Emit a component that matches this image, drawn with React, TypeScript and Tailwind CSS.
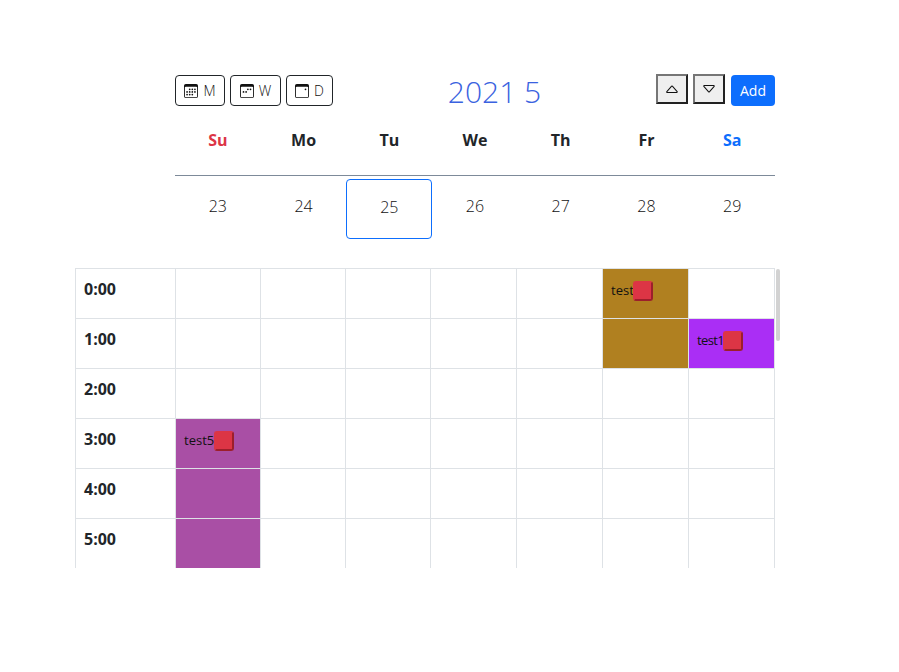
import { BsCalendar3, BsCalendar3Event, BsCalendar3Week, BsCaretDown, BsCaretUp } from 'react-icons/bs';

const days = [
  { label: 'Su', date: 23, color: 'text-[#dc3545]' },
  { label: 'Mo', date: 24, color: 'text-[#212529]' },
  { label: 'Tu', date: 25, color: 'text-[#212529]' },
  { label: 'We', date: 26, color: 'text-[#212529]' },
  { label: 'Th', date: 27, color: 'text-[#212529]' },
  { label: 'Fr', date: 28, color: 'text-[#212529]' },
  { label: 'Sa', date: 29, color: 'text-[#0d6efd]' },
];

const hours = [0, 1, 2, 3, 4, 5];

// key: hour-dayIndex
const events: Record<string, { color: string; title?: string; fit?: string }> = {
  '0-5': { color: 'bg-[#b08020]', title: 'test', fit: '-mr-px' },
  '1-5': { color: 'bg-[#b08020]' },
  '1-6': { color: 'bg-[#aa2ef5]', title: 'test1', fit: '-mr-px tracking-[-0.6px]' },
  '3-0': { color: 'bg-[#a94fa5]', title: 'test5', fit: 'mr-0' },
  '4-0': { color: 'bg-[#a94fa5]' },
  '5-0': { color: 'bg-[#a94fa5]' },
};

function ViewButton({ icon, label, width }: { icon: React.ReactNode; label: string; width: string }) {
  return (
    <button className={`flex h-[31px] items-center justify-center gap-[5px] rounded border border-[#212529] bg-white text-sm font-light text-[#111] ${width}`}>
      {icon}
      {label}
    </button>
  );
}

function ArrowButton({ children }: { children: React.ReactNode }) {
  return (
    <button className="flex h-[30px] w-8 items-center justify-center border-2 border-t-[#767676] border-r-[#222222] border-b-[#222222] border-l-[#767676] bg-[#efefef] text-[#111]">
      {children}
    </button>
  );
}

export default function App() {
  return (
    <div className="h-[672px] bg-white pt-[74px] pl-[75px] font-['Open_Sans','Noto_Sans',sans-serif] text-[#212529]">
      <div className="ml-[100px] w-[600px]">
        <div className="flex h-[32px] items-center justify-between">
          <div className="mt-px flex gap-[5px]">
            <ViewButton icon={<BsCalendar3 size={14} />} label="M" width="w-[50px]" />
            <ViewButton icon={<BsCalendar3Week size={14} />} label="W" width="w-[51px]" />
            <ViewButton icon={<BsCalendar3Event size={14} />} label="D" width="w-[47px]" />
          </div>
          <div className="mt-[3px] text-[30px] font-light text-[#3a62e0]">2021 5</div>
          <div className="flex items-start gap-[5px] self-start">
            <ArrowButton>
              <BsCaretUp size={16} />
            </ArrowButton>
            <ArrowButton>
              <BsCaretDown size={16} />
            </ArrowButton>
            <button className="mt-px ml-px h-[31px] w-11 rounded bg-[#0d6efd] text-sm text-white">Add</button>
          </div>
        </div>

        <div className="mt-[19px] grid h-[51px] grid-cols-7 border-b border-[#7d8a99]">
          {days.map((d) => (
            <div key={d.label} className={`pt-[3px] text-center text-base font-bold ${d.color}`}>
              {d.label}
            </div>
          ))}
        </div>

        <div className="mt-[3px] grid h-[60px] grid-cols-7">
          {days.map((d) => (
            <div
              key={d.date}
              className={`flex items-center justify-center pb-[6px] text-base font-light text-[#111] ${
                d.date === 25 ? 'rounded border border-[#0d6efd] pt-[2px]' : ''
              }`}
            >
              {d.date}
            </div>
          ))}
        </div>
      </div>

      <div className="relative mt-[29px] w-[707px]">
        <div className="h-[300px] w-[700px] overflow-hidden">
          <table className="w-[700px] table-fixed border-collapse">
            <colgroup>
              <col className="w-[100px]" />
              <col className="w-[85px]" />
              <col className="w-[85px]" />
              <col className="w-[85px]" />
              <col className="w-[86px]" />
              <col className="w-[86px]" />
              <col className="w-[86px]" />
              <col className="w-[86px]" />
            </colgroup>
            <tbody>
              {hours.map((h) => (
                <tr key={h} className="h-[50px]">
                  <td className="border border-[#dee2e6] pb-[10px] pl-2 align-middle text-base font-bold">{h}:00</td>
                  {days.map((d, i) => {
                    const ev = events[`${h}-${i}`];
                    return (
                      <td key={d.label} className={`border border-[#dee2e6] pb-[5px] pl-2 align-middle text-[13px] text-[#111] ${ev ? ev.color : ''}`}>
                        {ev?.title && (
                          <div className="flex items-center">
                            <span className={ev.fit}>{ev.title}</span>
                            <button className="h-5 w-5 rounded-[3px] border-2 border-t-[#dc3545] border-r-[#9c1f2b] border-b-[#9c1f2b] border-l-[#dc3545] bg-[#dc3545]" />
                          </div>
                        )}
                      </td>
                    );
                  })}
                </tr>
              ))}
            </tbody>
          </table>
        </div>
        <div className="absolute top-px left-[701px] h-[72px] w-1 rounded-sm bg-[#d2d2d2]" />
      </div>
    </div>
  );
}
